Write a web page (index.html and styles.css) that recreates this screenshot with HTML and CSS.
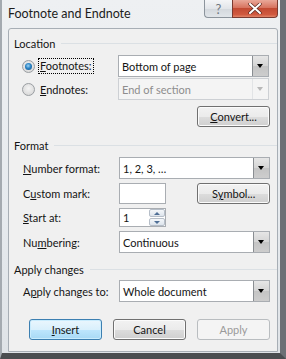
FILE: index.html
```html
<!DOCTYPE html>
<html lang="en">
<head>
  <meta charset="UTF-8">
  <title>Footnote and Endnote</title>
  <link rel="stylesheet" href="styles.css">
</head>
<body>

  <div class="window">
    <div class="titlebar">
      <span class="title">Footnote and Endnote</span>
      <div class="caption">
        <span class="cap-btn help">?</span>
        <span class="cap-btn close">
          <svg width="14" height="11" viewBox="0 0 14 11">
            <path d="M2 1 L12 10 M12 1 L2 10" stroke="#5a2a22" stroke-width="3.4" stroke-linecap="round"/>
            <path d="M2 1 L12 10 M12 1 L2 10" stroke="#fff" stroke-width="2" stroke-linecap="round"/>
          </svg>
        </span>
      </div>
    </div>

    <div class="client">
      <!-- Location -->
      <div class="group-head">Location</div>
      <div class="row row-first">
        <div class="radio-label">
          <span class="radio checked"></span>
          <span class="focus"><u>F</u>ootnotes:</span>
        </div>
        <div class="combo">
          <span class="value">Bottom of page</span>
          <span class="arrow"></span>
        </div>
      </div>
      <div class="row row-tight">
        <div class="radio-label">
          <span class="radio"></span>
          <span class="text"><u>E</u>ndnotes:</span>
        </div>
        <div class="combo disabled">
          <span class="value">End of section</span>
          <span class="arrow"></span>
        </div>
      </div>
      <div class="row row-end">
        <button class="btn"><u>C</u>onvert...</button>
      </div>

      <!-- Format -->
      <div class="group-head head-format">Format</div>
      <div class="row row-first">
        <span class="label"><u>N</u>umber format:</span>
        <div class="combo">
          <span class="value">1, 2, 3, …</span>
          <span class="arrow"></span>
        </div>
      </div>
      <div class="row row-mark">
        <span class="label">C<u>u</u>stom mark:</span>
        <div class="textbox"></div>
        <button class="btn btn-symbol">S<u>y</u>mbol...</button>
      </div>
      <div class="row row-start">
        <span class="label"><u>S</u>tart at:</span>
        <div class="spinner">
          <span class="value">1</span>
          <div class="spin-btns">
            <span class="spin up"></span>
            <span class="spin down"></span>
          </div>
        </div>
      </div>
      <div class="row row-numbering">
        <span class="label">Nu<u>m</u>bering:</span>
        <div class="combo">
          <span class="value">Continuous</span>
          <span class="arrow"></span>
        </div>
      </div>

      <!-- Apply changes -->
      <div class="group-head head-apply">Apply changes</div>
      <div class="row row-apply">
        <span class="label">A<u>p</u>ply changes to:</span>
        <div class="combo">
          <span class="value">Whole document</span>
          <span class="arrow"></span>
        </div>
      </div>

      <div class="actions">
        <button class="btn default"><u>I</u>nsert</button>
        <button class="btn">Cancel</button>
        <button class="btn" disabled>Apply</button>
      </div>
    </div>
  </div>

</body>
</html>
```

FILE: styles.css
```css
body {
  margin: 0;
  font-family: Lato, sans-serif;
  font-size: 11px;
  color: #141414;
  background: #fff;
}

u {
  text-decoration-thickness: 1px;
  text-underline-offset: 1px;
}

.window {
  width: 286px;
  height: 359px;
  box-sizing: border-box;
  background: linear-gradient(to bottom, #eef0f2 0%, #e6eaee 60%, #dfe3e7 100%);
  border-left: 2px solid #a4aab0;
  border-right: 6px solid #6c7075;
  border-bottom: 6px solid #4a4d50;
}

.titlebar {
  height: 28px;
  display: flex;
  align-items: flex-start;
  justify-content: space-between;
}

.title {
  margin: 6px 0 0 6px;
  font-size: 12.5px;
  color: #1c1c1c;
}

.caption {
  display: flex;
  margin-right: 2px;
}

.cap-btn {
  height: 18px;
  display: flex;
  align-items: center;
  justify-content: center;
  box-sizing: border-box;
}

.help {
  width: 28px;
  border: 1px solid #8c949c;
  border-top: none;
  border-right: none;
  border-radius: 0 0 0 4px;
  background: linear-gradient(to bottom, #f4f5f7 0%, #e2e5e9 50%, #d3d8dd 51%, #e1e5e9 100%);
  color: #6e7780;
  font-size: 13px;
}

.close {
  width: 46px;
  border: 1px solid #7a3a30;
  border-top: none;
  border-radius: 0 0 4px 0;
  background: linear-gradient(to bottom, #e9a899 0%, #d7735f 45%, #c24a33 50%, #d0593f 85%, #e28468 100%);
}

.client {
  margin-left: 6px;
  width: 270px;
  height: 324px;
  box-sizing: border-box;
  background: #f0f0f0;
  border: 1px solid #a7aeb5;
  border-radius: 3px 3px 0 0;
  padding: 6px 7px 0 5px;
  display: flex;
  flex-direction: column;
}

.group-head {
  display: flex;
  align-items: center;
  gap: 6px;
  height: 16px;
  margin-right: -7px;
}

.group-head::after {
  content: "";
  flex: 1;
  height: 1px;
  background: #dbe0e4;
}

.head-format {
  margin-top: 10px;
}

.head-apply {
  margin-top: 8px;
}

.row {
  display: flex;
  align-items: center;
  padding-left: 9px;
}

.row-first {
  margin-top: 4px;
}

.row-tight {
  margin-top: 1px;
}

.row-end {
  justify-content: flex-end;
  margin-top: 6px;
}

.row-mark {
  margin-top: 4px;
}

.row-start {
  margin-top: 4px;
}

.row-numbering {
  margin-top: 4px;
}

.row-apply {
  margin-top: 3px;
}

.label {
  width: 96px;
}

.radio-label {
  width: 96px;
  display: flex;
  align-items: center;
  margin-left: -1px;
}

.radio-label .text,
.radio-label .focus {
  margin-left: 4px;
  padding: 0 1px;
}

.focus {
  outline: 1px dotted #000;
  outline-offset: 0;
  line-height: 14px;
}

.radio {
  width: 11px;
  height: 11px;
  border-radius: 50%;
  border: 1px solid #9a9ea2;
  background: radial-gradient(circle at 50% 40%, #f4f4f4 0%, #dcdcdc 70%, #c8c8c8 100%);
  position: relative;
}

.radio.checked::after {
  content: "";
  position: absolute;
  left: 2px;
  top: 2px;
  width: 7px;
  height: 7px;
  border-radius: 50%;
  background: radial-gradient(circle at 45% 40%, #9fd6f6 0%, #2b83c4 45%, #0f4e86 100%);
}

.combo {
  width: 151px;
  height: 22px;
  box-sizing: border-box;
  border: 1px solid #a9adb2;
  background: #fff;
  display: flex;
  align-items: center;
  justify-content: space-between;
}

.combo .value {
  padding-left: 3px;
}

.combo .arrow {
  width: 16px;
  height: 20px;
  box-sizing: border-box;
  border-left: 1px solid #8a8e92;
  background: linear-gradient(to bottom, #e6e6e6 0%, #d4d4d4 50%, #c4c4c4 51%, #cdcdcd 100%);
  position: relative;
}

.combo .arrow::after {
  content: "";
  position: absolute;
  left: 4px;
  top: 8px;
  border-left: 3.5px solid transparent;
  border-right: 3.5px solid transparent;
  border-top: 4px solid #000;
}

.combo.disabled {
  background: #f4f4f4;
  border-color: #cdd0d4;
  color: #8d8d8d;
}

.combo.disabled .arrow {
  background: #f4f4f4;
  border-left: 1px solid #e2e4e6;
}

.combo.disabled .arrow::after {
  border-top-color: #b8b8b8;
}

.textbox {
  width: 48px;
  height: 21px;
  box-sizing: border-box;
  border: 1px solid #a9adb2;
  background: #fff;
}

.spinner {
  width: 47px;
  height: 19px;
  box-sizing: border-box;
  border: 1px solid #a9adb2;
  background: #fff;
  display: flex;
  justify-content: space-between;
}

.spinner .value {
  padding-left: 3px;
  line-height: 17px;
}

.spin-btns {
  width: 16px;
  display: flex;
  flex-direction: column;
  gap: 1px;
}

.spin {
  flex: 1;
  border: 1px solid #b6bec8;
  border-radius: 2px;
  background: linear-gradient(to bottom, #f4f7fa, #dde4ec);
  position: relative;
}

.spin::after {
  content: "";
  position: absolute;
  left: 4px;
  border-left: 3px solid transparent;
  border-right: 3px solid transparent;
}

.spin.up::after {
  top: 2px;
  border-bottom: 3px solid #4f6f96;
}

.spin.down::after {
  top: 2px;
  border-top: 3px solid #4f6f96;
}

.btn {
  width: 73px;
  height: 21px;
  padding: 0;
  font-family: inherit;
  font-size: 11px;
  color: #141414;
  border: 1px solid #707070;
  border-radius: 3px;
  background: linear-gradient(to bottom, #f2f2f2 0%, #ebebeb 50%, #dddddd 51%, #cfcfcf 100%);
  box-shadow: inset 0 0 0 1px #fbfbfb;
}

.btn-symbol {
  margin-left: 31px;
}

.btn.default {
  border-color: #3c7fb1;
  background: linear-gradient(to bottom, #eaf6fd 0%, #d9f0fc 50%, #bee6fd 51%, #a7d9f5 100%);
  box-shadow: inset 0 0 0 1px #c9ecfd;
}

.btn:disabled {
  border-color: #b9bdc0;
  background: #f4f4f4;
  color: #9a9a9a;
  box-shadow: none;
}

.actions {
  display: flex;
  justify-content: flex-end;
  gap: 11px;
  margin-top: 17px;
}
```
